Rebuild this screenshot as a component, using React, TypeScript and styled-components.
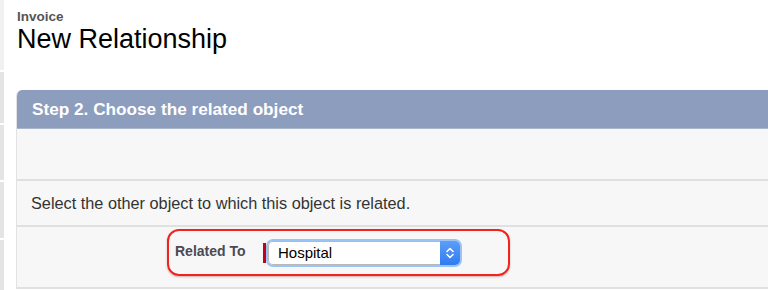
import styled, { createGlobalStyle } from 'styled-components';

const GlobalStyle = createGlobalStyle`
  html, body {
    margin: 0;
    padding: 0;
    background: #fff;
    overflow: hidden;
  }
  body {
    font-family: 'Liberation Sans', Arial, Helvetica, sans-serif;
  }
`;

type SegmentProps = {
  h: number;
  light?: boolean;
};

const Page = styled.div`
  display: flex;
  width: 768px;
  height: 290px;
  overflow: hidden;
`;

const SideStrip = styled.div`
  display: flex;
  flex-direction: column;
  gap: 2px;
  width: 4px;
  flex: 0 0 auto;
`;

const StripSegment = styled.div<SegmentProps>`
  height: ${({ h }) => h}px;
  background: ${({ light }) => (light ? '#f1f1f1' : '#e4e4e4')};
`;

const Main = styled.div`
  flex: 1;
  padding: 9px 0 0 12px;
  min-width: 0;
`;

const PageHeader = styled.div`
  padding-left: 1px;
`;

const ObjectType = styled.div`
  font-size: 13.5px;
  font-weight: 700;
  color: #555;
  line-height: 15px;
`;

const PageTitle = styled.h1`
  margin: 0;
  font-size: 27px;
  font-weight: 400;
  color: #000;
  line-height: 31px;
`;

const Panel = styled.div`
  margin-top: 35px;
  margin-right: -20px;
  border-left: 1px solid #e2e2e2;
  border-top-left-radius: 6px;
  overflow: hidden;
`;

const PanelHeader = styled.div`
  height: 38px;
  background: #8c9dbe;
  border-bottom: 1px solid #a9b6cf;
  display: flex;
  align-items: center;
  padding-left: 15px;
`;

const PanelTitle = styled.h2`
  margin: 0;
  font-size: 17.2px;
  font-weight: 700;
  color: #fff;
`;

type RowProps = {
  h: number;
};

const Row = styled.div<RowProps>`
  height: ${({ h }) => h}px;
  background: #f7f7f7;
  border-bottom: 2px solid #e0e0e0;
  display: flex;
  align-items: center;
  padding-left: 14px;
`;

const FieldRow = styled.div`
  height: 62px;
  background: #f7f7f7;
  border-bottom: 2px solid #e0e0e0;
  display: flex;
  align-items: flex-start;
  padding: 2px 0 0 150px;
  box-sizing: border-box;
`;

const Instruction = styled.p`
  margin: 0;
  font-size: 16.3px;
  color: #333;
`;

const Highlight = styled.div`
  display: flex;
  align-items: flex-start;
  width: 343px;
  height: 47px;
  box-sizing: border-box;
  border: 2.5px solid #f2231d;
  border-radius: 12px;
  box-shadow: 0 1px 2px rgba(120, 0, 0, 0.3);
  padding: 9px 0 0 6px;
`;

const FieldLabel = styled.label`
  width: 88px;
  font-size: 14px;
  font-weight: 700;
  color: #4a4a55;
  padding-top: 3px;
`;

const RequiredInput = styled.div`
  display: flex;
  align-items: center;
  gap: 2px;
  padding-top: 1px;
`;

const RequiredBar = styled.div`
  width: 3px;
  height: 20px;
  background: #c4001a;
`;

const SelectBox = styled.div`
  display: flex;
  width: 192px;
  height: 24px;
  box-sizing: border-box;
  border-radius: 5px;
  background: #fff;
  box-shadow: 0 0 0 2px #9cc3f5, inset 0 0 0 1px #b8b8b8;
  overflow: hidden;
`;

const SelectValue = styled.span`
  flex: 1;
  font-size: 15px;
  color: #000;
  padding-left: 10px;
  line-height: 24px;
`;

const SelectArrow = styled.div`
  width: 20px;
  height: 100%;
  background: linear-gradient(#5c9ef7, #2f7bf2);
  display: flex;
  align-items: center;
  justify-content: center;
`;

const App = () => {
  return (
    <>
      <GlobalStyle />
      <Page>
        <SideStrip>
          <StripSegment h={70} light />
          <StripSegment h={51} />
          <StripSegment h={55} />
          <StripSegment h={56} />
          <StripSegment h={50} />
        </SideStrip>
        <Main>
          <PageHeader>
            <ObjectType>Invoice</ObjectType>
            <PageTitle>New Relationship</PageTitle>
          </PageHeader>
          <Panel>
            <PanelHeader>
              <PanelTitle>Step 2. Choose the related object</PanelTitle>
            </PanelHeader>
            <Row h={50} />
            <Row h={44}>
              <Instruction>
                Select the other object to which this object is related.
              </Instruction>
            </Row>
            <FieldRow>
              <Highlight>
                <FieldLabel>Related To</FieldLabel>
                <RequiredInput>
                  <RequiredBar />
                  <SelectBox>
                    <SelectValue>Hospital</SelectValue>
                    <SelectArrow>
                      <svg width='10' height='14' viewBox='0 0 10 14'>
                        <path
                          d='M2 5.5 L5 2.5 L8 5.5 M2 8.5 L5 11.5 L8 8.5'
                          fill='none'
                          stroke='#fff'
                          strokeWidth='1.6'
                          strokeLinecap='round'
                          strokeLinejoin='round'
                        />
                      </svg>
                    </SelectArrow>
                  </SelectBox>
                </RequiredInput>
              </Highlight>
            </FieldRow>
          </Panel>
        </Main>
      </Page>
    </>
  );
};

export default App;
